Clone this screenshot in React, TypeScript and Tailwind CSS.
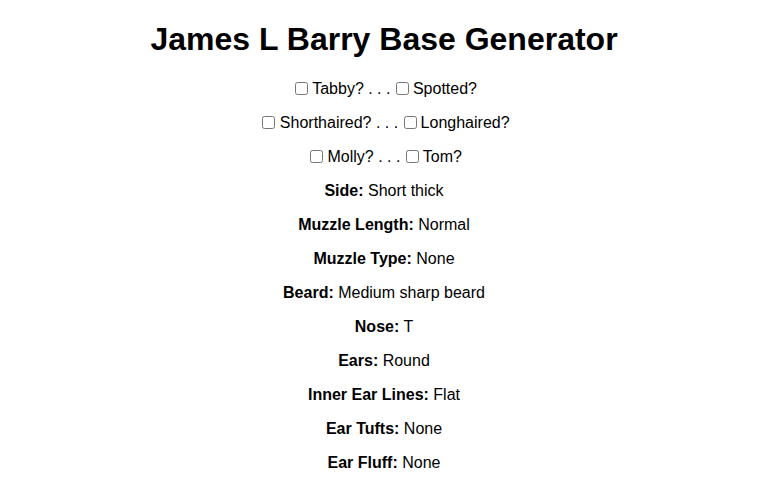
import React from 'react';

const traits: [string, string][] = [
  ['Side', 'Short thick'],
  ['Muzzle Length', 'Normal'],
  ['Muzzle Type', 'None'],
  ['Beard', 'Medium sharp beard'],
  ['Nose', 'T'],
  ['Ears', 'Round'],
  ['Inner Ear Lines', 'Flat'],
  ['Ear Tufts', 'None'],
  ['Ear Fluff', 'None'],
];

const toggles: [string, string][] = [
  ['Tabby?', 'Spotted?'],
  ['Shorthaired?', 'Longhaired?'],
  ['Molly?', 'Tom?'],
];

export default function App() {
  return (
    <div className="bg-white text-black text-center font-['Liberation_Sans',Arial,sans-serif] text-base leading-[18px]">
      <h1 className="pt-[21px] pb-[22px] text-[32px] leading-[37px] font-bold">James L Barry Base Generator</h1>
      <div className="flex flex-col gap-4">
        {toggles.map(([a, b]) => (
          <p key={a} className="h-[18px]">
            <input type="checkbox" className="w-[13px] h-[13px] my-0 ml-[4px] mr-0 align-[-1px]" /> {a} . . .{' '}
            <input type="checkbox" className="w-[13px] h-[13px] my-0 ml-[1px] mr-[4px] align-[-1px]" />
            {b}
          </p>
        ))}
        {traits.map(([k, v]) => (
          <p key={k}>
            <b>{k}:</b> {v}
          </p>
        ))}
      </div>
    </div>
  );
}
